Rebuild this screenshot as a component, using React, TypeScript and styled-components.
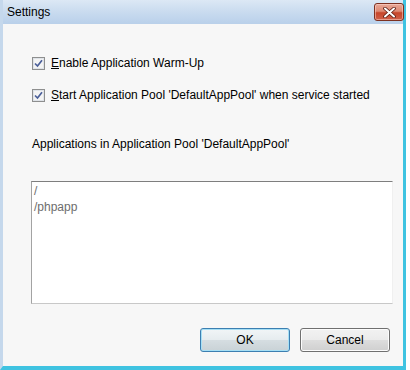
import React, { FC } from 'react';
import styled, { createGlobalStyle } from 'styled-components';

const GlobalStyle = createGlobalStyle`
    html, body {
        margin: 0;
        padding: 0;
        background: #ffffff;
    }
`;

const Window = styled.div`
    box-sizing: border-box;
    width: 406px;
    height: 370px;
    display: flex;
    flex-direction: column;
    border-left: 3px solid #c5d8ec;
    border-right: 3px solid #3fc3e1;
    border-bottom: 4px solid #3fc3e1;
    background: #f7f7f7;
    font-family: 'Liberation Sans', Arial, sans-serif;
    font-size: 12px;
    color: #000;
`;

const TitleBar = styled.div`
    flex: none;
    height: 24px;
    display: flex;
    align-items: center;
    justify-content: space-between;
    padding: 0 0 0 4px;
    background: linear-gradient(to bottom, #dce8f5 0%, #c9dbef 50%, #b9d0ea 100%);
`;

const Title = styled.span`
    font-size: 12px;
    color: #000;
`;

const CloseButton = styled.button`
    box-sizing: border-box;
    width: 30px;
    height: 18px;
    margin-right: -1px;
    padding: 0;
    display: flex;
    align-items: center;
    justify-content: center;
    border: 1px solid #7d3121;
    border-radius: 3px;
    background: linear-gradient(to bottom, #e9a898 0%, #dd8a74 45%, #c6452a 55%, #d0604a 100%);
    box-shadow: inset 0 0 0 1px rgba(255, 220, 210, 0.5);
`;

const Body = styled.div`
    flex: 1;
    display: flex;
    flex-direction: column;
    padding: 31px 10px 0 28px;
`;

const CheckRow = styled.label<{ $gap?: number }>`
    display: flex;
    align-items: center;
    height: 16px;
    margin-top: ${props => props.$gap || 0}px;
    padding-left: 1px;
`;

const CheckBox = styled.span`
    box-sizing: border-box;
    flex: none;
    width: 13px;
    height: 13px;
    margin-right: 6px;
    display: flex;
    align-items: center;
    justify-content: center;
    border: 1px solid #8e8f8f;
    background: #f4f4f4;
    box-shadow: inset 0 0 0 1px #dfe3e8;
`;

const AccessKey = styled.span`
    text-decoration: underline;
    text-underline-offset: 1px;
`;

const SectionLabel = styled.div`
    height: 16px;
    line-height: 16px;
    margin-top: 33px;
    padding-left: 1px;
`;

const ListBox = styled.div`
    box-sizing: border-box;
    height: 123px;
    margin-top: 29px;
    padding: 1px 2px;
    background: #ffffff;
    border-top: 1px solid #7e7e7e;
    border-left: 1px solid #a3a3a3;
    border-bottom: 1px solid #c8c8c8;
    border-right: 1px solid #f0f0f0;
    color: #6d6d6d;
`;

const ListItem = styled.div`
    line-height: 16px;
`;

const ButtonRow = styled.div`
    display: flex;
    justify-content: flex-end;
    gap: 10px;
    margin-top: 24px;
    padding-right: 3px;
`;

const DialogButton = styled.button<{ $default?: boolean }>`
    box-sizing: border-box;
    width: 90px;
    height: 24px;
    padding: 0;
    font-family: inherit;
    font-size: 12px;
    color: #000;
    border: 1px solid ${props => (props.$default ? '#3c7fb1' : '#707070')};
    border-radius: 3px;
    background: ${props => (props.$default
        ? 'linear-gradient(to bottom, #f1f5f7 0%, #e6ecef 48%, #d5dde1 52%, #c9d2d6 100%)'
        : 'linear-gradient(to bottom, #f2f2f2 0%, #ebebeb 48%, #dddddd 52%, #cfcfcf 100%)')};
    box-shadow: inset 0 0 0 1px ${props => (props.$default ? '#a6dff5' : '#fcfcfc')};
`;

const CheckMark: FC = () => (
    <svg width="9" height="9" viewBox="0 0 9 9">
        <path d="M1 4.5 L3.5 7 L8 1.2" fill="none" stroke="#4b5f99" strokeWidth="1.7" />
    </svg>
);

const CloseGlyph: FC = () => (
    <svg width="13" height="11" viewBox="0 0 13 11">
        <path d="M2 1.5 L11 9.5 M11 1.5 L2 9.5" stroke="#5a1a10" strokeWidth="3.6" strokeLinecap="round" />
        <path d="M2 1.5 L11 9.5 M11 1.5 L2 9.5" stroke="#ffffff" strokeWidth="2" strokeLinecap="round" />
    </svg>
);

const App: FC = () => {
    const applications = ['/', '/phpapp'];

    return (
        <>
            <GlobalStyle />
            <Window>
                <TitleBar>
                    <Title>Settings</Title>
                    <CloseButton aria-label="Close">
                        <CloseGlyph />
                    </CloseButton>
                </TitleBar>
                <Body>
                    <CheckRow>
                        <CheckBox><CheckMark /></CheckBox>
                        <span><AccessKey>E</AccessKey>nable Application Warm-Up</span>
                    </CheckRow>
                    <CheckRow $gap={16}>
                        <CheckBox><CheckMark /></CheckBox>
                        <span><AccessKey>S</AccessKey>tart Application Pool 'DefaultAppPool' when service started</span>
                    </CheckRow>
                    <SectionLabel>Applications in Application Pool 'DefaultAppPool'</SectionLabel>
                    <ListBox>
                        {applications.map(app => <ListItem key={app}>{app}</ListItem>)}
                    </ListBox>
                    <ButtonRow>
                        <DialogButton $default>OK</DialogButton>
                        <DialogButton>Cancel</DialogButton>
                    </ButtonRow>
                </Body>
            </Window>
        </>
    );
};

export default App;
